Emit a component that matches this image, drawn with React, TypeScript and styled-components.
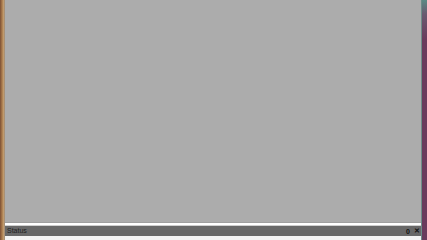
import React from 'react';
import styled, { createGlobalStyle } from 'styled-components';

const GlobalStyle = createGlobalStyle`
  html, body {
    margin: 0;
    padding: 0;
    background: #f2f2f2;
  }
  #root {
    width: 427px;
    height: 240px;
  }
`;

const Frame = styled.div`
  display: flex;
  width: 427px;
  height: 240px;
  overflow: hidden;
  font-family: 'Liberation Sans', Arial, sans-serif;
`;

const LeftEdge = styled.div`
  width: 5px;
  background: linear-gradient(90deg, #7a4e34 0%, #a87a4c 40%, #c09a6c 70%, #9c8c7c 100%);
`;

const RightEdge = styled.div`
  width: 5px;
  background: linear-gradient(180deg, #5c8a84 0px, #6a5a70 14px, #6a3a5c 40px, #6a3a5c 100%);
  border-left: 1px solid #6c8c88;
`;

const Main = styled.div`
  flex: 1;
  display: flex;
  flex-direction: column;
`;

const Canvas = styled.div`
  flex: 1;
  background: #acacac;
  border-bottom: 1px solid #9f9f9f;
`;

const Divider = styled.div`
  height: 2px;
  background: #ffffff;
  border-bottom: 1px solid #d0d0d0;
`;

const StatusBar = styled.div`
  height: 10px;
  background: #686868;
  display: flex;
  align-items: center;
  justify-content: space-between;
  padding: 0 1px 0 2px;
  font-size: 7px;
  color: #1e1e1e;
`;

const StatusLabel = styled.span`
  line-height: 10px;
`;

const StatusTools = styled.div`
  display: flex;
  align-items: center;
  gap: 4px;
  color: #111;
  font-weight: bold;
`;

const Footer = styled.div`
  height: 4px;
  background: #f4f4f4;
`;

export default function App() {
  return (
    <>
      <GlobalStyle />
      <Frame>
        <LeftEdge />
        <Main>
          <Canvas />
          <Divider />
          <StatusBar>
            <StatusLabel>Status</StatusLabel>
            <StatusTools>
              <span>0</span>
              <span>✕</span>
            </StatusTools>
          </StatusBar>
          <Footer />
        </Main>
        <RightEdge />
      </Frame>
    </>
  );
}
